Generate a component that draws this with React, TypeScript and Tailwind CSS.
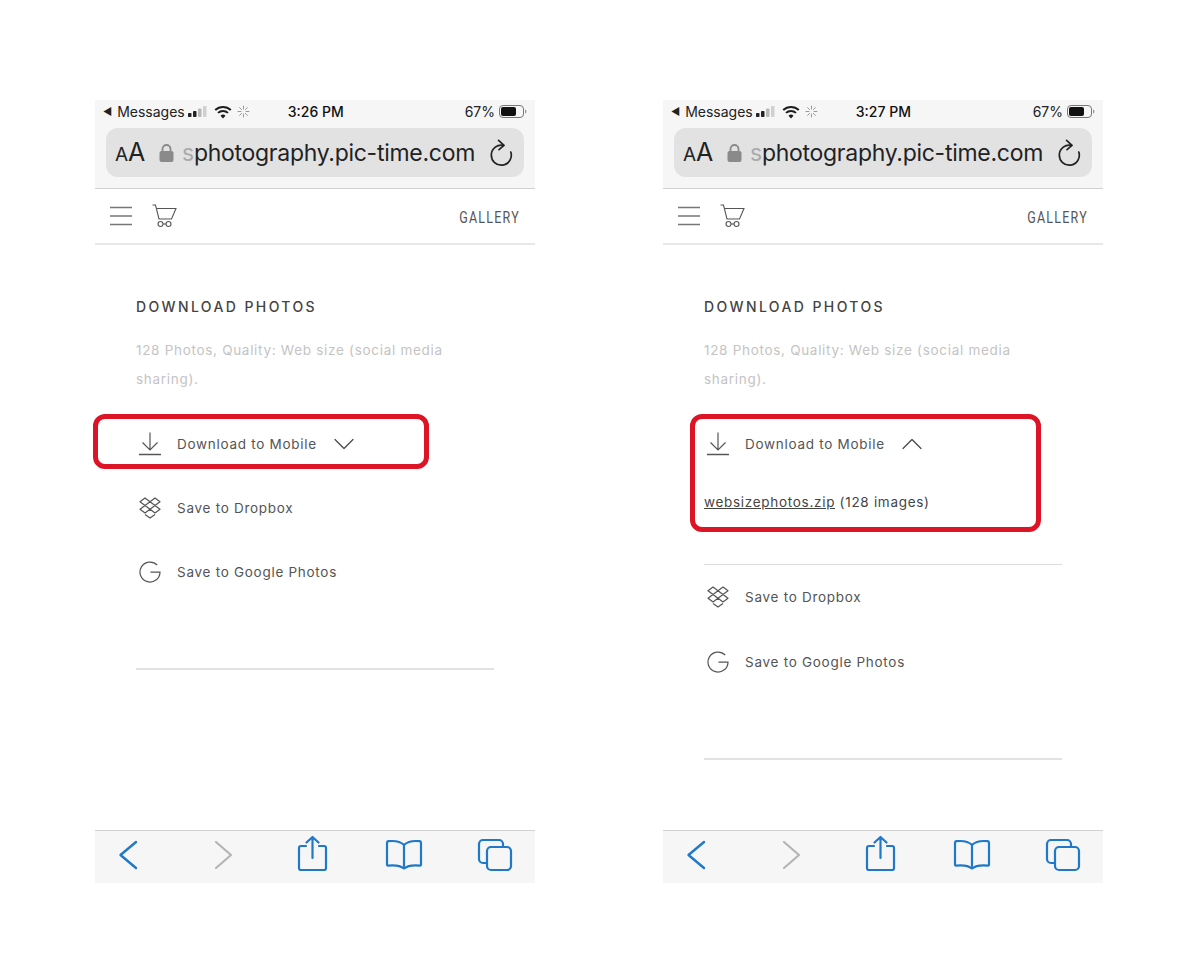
import { ChevronDown, ChevronUp } from "lucide-react";

const sans = "font-['Inter','Liberation_Sans',sans-serif]";

function Signal() {
  return (
    <svg width="20" height="14" viewBox="0 0 20 14" className="text-[#222]">
      <rect x="0" y="8" width="3.500" height="4" rx="0.8" fill="currentColor" />
      <rect x="5" y="6" width="3.500" height="6" rx="0.8" fill="currentColor" />
      <rect x="10" y="3.500" width="3.500" height="8.500" rx="0.8" fill="#b8b8b8" />
      <rect x="15" y="1" width="3.500" height="11" rx="0.8" fill="#d0d0d0" />
    </svg>
  );
}

function Wifi() {
  return (
    <svg width="18" height="14" viewBox="0 0 18 14" fill="none" stroke="#1c1c1c" strokeWidth="2">
      <path d="M1.200 5a11.300 11.300 0 0 1 15.600 0" />
      <path d="M4 7.900a7.200 7.200 0 0 1 10 0" />
      <path d="M9 13.400 6.500 10.700a3.600 3.600 0 0 1 5 0Z" fill="#1c1c1c" stroke="none" />
    </svg>
  );
}

function Spinner() {
  return (
    <svg width="13" height="13" viewBox="0 0 13 13" stroke="#9a9a9a" strokeWidth="1" strokeLinecap="round">
      <path d="M6.500 1v3M6.500 9v3M1 6.500h3M9 6.500h3M2.600 2.600l2 2M8.400 8.400l2 2M2.600 10.400l2-2M8.400 4.600l2-2" />
    </svg>
  );
}

function Battery() {
  return (
    <svg width="28" height="13" viewBox="0 0 28 13" fill="none">
      <rect x="0.500" y="0.500" width="24" height="12" rx="3.500" stroke="#777" />
      <rect x="2" y="2" width="15" height="9" rx="2" fill="#111" />
      <path d="M26 4.500v4c.9-.3 1.400-1.100 1.400-2s-.5-1.700-1.400-2Z" fill="#999" />
    </svg>
  );
}

function Lock() {
  return (
    <svg width="15" height="20" viewBox="0 0 15 20" className="shrink-0">
      <path d="M3.500 9V6a4 4 0 0 1 8 0v3" fill="none" stroke="#8a8a8a" strokeWidth="1.800" />
      <rect x="0.500" y="8" width="14" height="11" rx="2" fill="#8a8a8a" />
    </svg>
  );
}

function Reload() {
  return (
    <svg width="24" height="28" viewBox="0 0 24 28" fill="none" stroke="#222" strokeWidth="1.700" strokeLinecap="round" strokeLinejoin="round">
      <path d="M14.600 6.400A10 10 0 1 0 21.800 13" />
      <path d="M9.600 1.400l5.400 5-5 4.200" />
    </svg>
  );
}

function Menu() {
  return (
    <svg width="22" height="20" viewBox="0 0 22 20" stroke="#777" strokeWidth="1.300">
      <path d="M0 1.500h22M0 10h22M0 18.500h22" />
    </svg>
  );
}

function Cart() {
  return (
    <svg width="25" height="24" viewBox="0 0 25 24" fill="none" stroke="#555" strokeWidth="1.100">
      <path d="M0.500 1h3l3.500 14h12.500L24 4.500H4" />
      <circle cx="8.500" cy="20" r="2.500" />
      <circle cx="16.500" cy="20" r="2.500" />
      <path d="M11 20h3" />
    </svg>
  );
}

function DownloadIcon() {
  return (
    <svg width="22" height="24" viewBox="0 0 22 24" fill="none" stroke="#555" strokeWidth="1.200">
      <path d="M11 0.500v17M3.500 10.500l7.500 7.500 7.500-7.500" />
      <path d="M0 22.500h22" strokeWidth="1.500" />
    </svg>
  );
}

function DropboxIcon() {
  return (
    <svg width="22" height="22" viewBox="0 0 22 22" fill="none" stroke="#555" strokeWidth="1.200" strokeLinejoin="round">
      <path d="M6 1 1 4.800l5 3.700 5-3.700ZM16 1l-5 3.800 5 3.700 5-3.700ZM6 8.500l-5 3.700L6 16l5-3.800ZM16 8.500l-5 3.700 5 3.800 5-3.800Z" />
      <path d="m6 17.500 5 3.500 5-3.500" />
    </svg>
  );
}

function GoogleIcon() {
  return (
    <svg width="22" height="22" viewBox="0 0 22 22" fill="none" stroke="#555" strokeWidth="1.200">
      <path d="M18.200 4.100A10 10 0 1 0 21 11.200H11.500" />
    </svg>
  );
}

function Row({
  icon,
  label,
  chevron,
  className,
}: {
  icon: React.ReactNode;
  label: string;
  chevron?: "up" | "down";
  className?: string;
}) {
  return (
    <div className={`flex h-16 items-center ${className ?? ""}`}>
      <div className="flex w-[41px] shrink-0 items-center pl-[3px]">{icon}</div>
      <span className="text-[13.5px] tracking-[0.72px] text-[#555]">{label}</span>
      {chevron === "down" && <ChevronDown size={36} strokeWidth={0.8} className="ml-[9px] text-[#444]" />}
      {chevron === "up" && <ChevronUp size={36} strokeWidth={0.8} className="ml-[9px] text-[#444]" />}
    </div>
  );
}

function BottomBar() {
  return (
    <div className="mt-auto h-[53px] border-t border-[#d2d2d2] bg-[#f6f6f6]">
      <svg width="440" height="52" viewBox="0 1 440 52" fill="none" strokeLinecap="round" strokeLinejoin="round">
        <path d="M41 12 25.500 25 41 38" stroke="#1f78c8" strokeWidth="2.400" />
        <path d="M121 12l15 13-15 13" stroke="#b5b5b5" strokeWidth="2.200" />
        <g stroke="#1f78c8" strokeWidth="2.200">
          <path d="M211 16h-5a2 2 0 0 0-2 2v20a2 2 0 0 0 2 2h23a2 2 0 0 0 2-2V18a2 2 0 0 0-2-2h-5" />
          <path d="M217.500 28V7M211.500 12.500l6-5.500 6 5.500" />
          <path d="M309 36V15c-3-3-8.500-4.500-15.500-3.800-.8.100-1.500.7-1.500 1.500v22c0 .6.500 1 1 .9 7-.7 12.500 0 16 2.900 3.500-2.900 9-3.600 16-2.900.5.100 1-.3 1-.9v-22c0-.8-.7-1.400-1.500-1.500C317.500 10.500 312 12 309 15" />
          <path d="M392 33h-4a4 4 0 0 1-4-4V14a4 4 0 0 1 4-4h16a4 4 0 0 1 4 4v3" />
          <rect x="392" y="17" width="24" height="23" rx="4" />
        </g>
      </svg>
    </div>
  );
}

function Phone({ time, expanded }: { time: string; expanded?: boolean }) {
  return (
    <div className={`${sans} relative flex h-[783px] w-[440px] flex-col bg-white`}>
      <div className="h-[89px] border-b border-[#cfcfcf] bg-[#f6f6f6] px-[8px]">
        <div className="flex h-[23px] items-center text-[14px] text-[#222]">
          <span className="text-[10px]">◀</span>
          <span className="ml-[5px]">Messages</span>
          <span className="ml-[3px]"><Signal /></span>
          <span className="ml-[6px]"><Wifi /></span>
          <span className="ml-[5px]"><Spinner /></span>
          <span className="ml-[38px] font-medium text-[#111]">{time}</span>
          <span className="ml-auto">67%</span>
          <span className="ml-[4px]"><Battery /></span>
        </div>
        <div className="ml-[3px] mt-[5px] flex h-[49px] w-[418px] items-center rounded-xl bg-[#e2e2e2] pl-[9px] pr-[11px] text-[#222]">
          <span className="w-[37px] shrink-0 text-[25px] leading-none"><span className="text-[19px]">A</span>A</span>
          <span className="ml-[7px] flex"><Lock /></span>
          <span className="ml-[8px] mt-px whitespace-nowrap text-[23px] tracking-[-0.28px]">
            <span className="text-[#aaa]">s</span>photography.pic-time.com
          </span>
          <span className="ml-auto flex"><Reload /></span>
        </div>
      </div>
      <div className="flex h-[56px] items-center border-b-2 border-[#e8e8e8] px-[15px]">
        <Menu />
        <span className="ml-[20px]"><Cart /></span>
        <span className="ml-auto mt-[3px] origin-right scale-x-[0.78] font-['Roboto',sans-serif] text-[16px] tracking-[1.6px] text-[#555]">GALLERY</span>
      </div>
      <div className="px-[41px] pt-[52px]">
        <h2 className="text-[14px] font-medium leading-5 tracking-[2.4px] text-[#444]">DOWNLOAD PHOTOS</h2>
        <p className="mt-[19px] text-[13.5px] leading-[29px] tracking-[0.7px] text-[#c4c4c4]">
          128 Photos, Quality: Web size (social media sharing).
        </p>
        <div className="mt-[18px]">
          <Row icon={<DownloadIcon />} label="Download to Mobile" chevron={expanded ? "up" : "down"} />
          {expanded && (
            <div className="h-[89px] border-b border-[#dcdcdc] pt-[16px] text-[13.5px] leading-5 tracking-[0.7px] text-[#444]">
              <span className="underline">websizephotos.zip</span> (128 images)
            </div>
          )}
          <Row icon={<DropboxIcon />} label="Save to Dropbox" />
          <Row icon={<GoogleIcon />} label="Save to Google Photos" className={expanded ? "mt-px" : ""} />
        </div>
        <div className="mt-[64px] h-[2px] bg-[#e2e2e2]" />
      </div>
      <BottomBar />
      {/* red callout drawn over the screenshot */}
      <div
        className={
          expanded
            ? "absolute left-[27px] top-[314px] h-[118px] w-[351px] rounded-[12px] border-[5px] border-[#dc1426]"
            : "absolute left-[-2px] top-[314px] h-[55px] w-[336px] rounded-[12px] border-[5px] border-[#dc1426]"
        }
      />
    </div>
  );
}

export default function App() {
  return (
    <div className="flex h-[960px] w-[1200px] gap-[128px] bg-white pl-[95px] pt-[100px]">
      <Phone time="3:26 PM" />
      <Phone time="3:27 PM" expanded />
    </div>
  );
}
